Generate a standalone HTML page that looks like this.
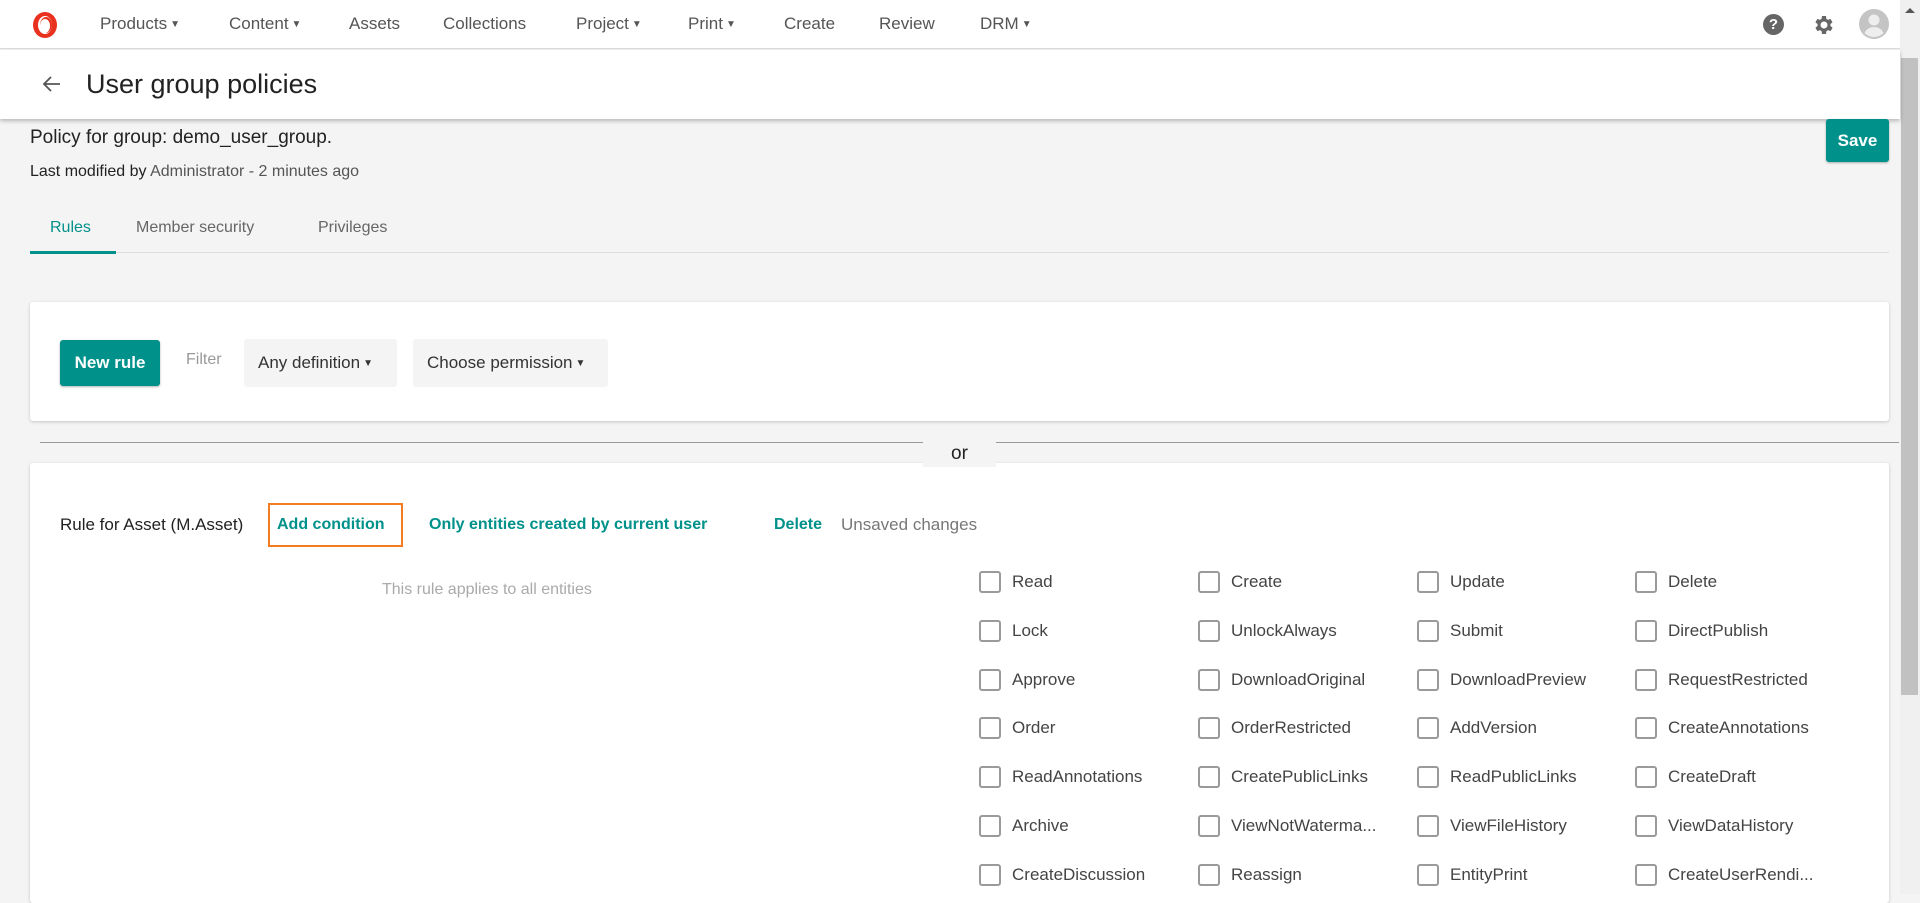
<!DOCTYPE html>
<html><head><meta charset="utf-8"><style>
*{box-sizing:border-box;margin:0;padding:0}
body{width:1920px;height:894px;overflow:hidden;background:#f4f4f4;font-family:"Liberation Sans",sans-serif;color:#222;position:relative}
.abs{position:absolute;white-space:nowrap}
.nav{position:absolute;left:0;top:0;width:1900px;height:49px;background:#fff;border-bottom:1px solid #ddd}
.nav .it{position:absolute;top:14px;font-size:17px;color:#555}
.car{font-size:10px;vertical-align:2px;margin-left:3px}
.hdr{position:absolute;left:0;top:50px;width:1900px;height:69px;background:#fff;box-shadow:0 2px 4px rgba(0,0,0,.25)}
.teal{color:#00918a}
.card{position:absolute;left:30px;width:1859px;background:#fff;box-shadow:0 1px 3px rgba(0,0,0,.2);border-radius:3px}
.cb{position:absolute;width:22px;height:22px;border:2px solid #9a9a9a;border-radius:3px;background:#fff}
.lb{position:absolute;font-size:17px;color:#444;white-space:nowrap}
</style></head><body>
<div class="nav">
  <svg class="abs" style="left:31px;top:10px" width="28" height="30" viewBox="0 0 28 30"><ellipse cx="14" cy="15" rx="12" ry="13" fill="#e8321f"/><ellipse cx="14" cy="15" rx="7" ry="9" fill="#fff"/><ellipse cx="15" cy="15" rx="6" ry="8" fill="#e8321f"/><ellipse cx="14" cy="16" rx="5" ry="7" fill="#fff"/></svg>
  <span class="it" style="left:100px">Products<span class="car">▼</span></span>
  <span class="it" style="left:229px">Content<span class="car">▼</span></span>
  <span class="it" style="left:349px">Assets</span>
  <span class="it" style="left:443px">Collections</span>
  <span class="it" style="left:576px">Project<span class="car">▼</span></span>
  <span class="it" style="left:688px">Print<span class="car">▼</span></span>
  <span class="it" style="left:784px">Create</span>
  <span class="it" style="left:879px">Review</span>
  <span class="it" style="left:980px">DRM<span class="car">▼</span></span>
  <div class="abs" style="left:1763px;top:14px;width:21px;height:21px;border-radius:50%;background:#666;color:#fff;font-weight:bold;font-size:15px;text-align:center;line-height:21px">?</div>
  <svg class="abs" style="left:1811px;top:13px" width="24" height="24" viewBox="0 0 24 24"><path fill="#666" d="M19.4 13a7.5 7.5 0 000-2l2.1-1.6-2-3.5-2.5 1a7.4 7.4 0 00-1.7-1L15 3h-4l-.4 2.9a7.4 7.4 0 00-1.7 1l-2.5-1-2 3.5L6.6 11a7.5 7.5 0 000 2l-2.2 1.6 2 3.5 2.5-1a7.4 7.4 0 001.7 1L11 21h4l.4-2.9a7.4 7.4 0 001.7-1l2.5 1 2-3.5zM13 15.5a3.5 3.5 0 110-7 3.5 3.5 0 010 7z"/></svg>
  <svg class="abs" style="left:1859px;top:9px" width="30" height="30" viewBox="0 0 30 30"><circle cx="15" cy="15" r="15" fill="#c4c4c4"/><circle cx="15" cy="11" r="5.5" fill="#eee"/><path d="M5.5 24c2-4.5 6-6 9.5-6s7.5 1.5 9.5 6a13 13 0 01-19 0z" fill="#eee"/></svg>
</div>
<div class="abs" style="left:1900px;top:0;width:20px;height:894px;background:#f0f0f0"></div>
<div class="abs" style="left:1905px;top:8px;width:0;height:0;border-left:5px solid transparent;border-right:5px solid transparent;border-bottom:5px solid #555"></div>
<div class="abs" style="left:1901px;top:58px;width:17px;height:637px;background:#c1c1c1"></div>
<div class="hdr">
  <svg class="abs" style="left:42px;top:24px" width="20" height="20" viewBox="0 0 20 20"><path d="M18 10H3M9 3l-7 7 7 7" stroke="#555" stroke-width="1.8" fill="none"/></svg>
  <span class="abs" style="left:86px;top:19px;font-size:27px;color:#222">User group policies</span>
</div>
<span class="abs" style="left:30px;top:127px;font-size:19px">Policy for group: demo_user_group.</span>
<span class="abs" style="left:30px;top:163px;font-size:16px;color:#333"><span style="color:#222">Last modified by</span> <span style="color:#555">Administrator - 2 minutes ago</span></span>
<div class="abs" style="left:1826px;top:119px;width:63px;height:43px;background:#00918a;border-radius:3px;color:#fff;font-weight:bold;font-size:17px;text-align:center;line-height:43px;box-shadow:0 1px 2px rgba(0,0,0,.3)">Save</div>
<span class="abs teal" style="left:50px;top:219px;font-size:16px">Rules</span>
<span class="abs" style="left:136px;top:219px;font-size:16px;color:#666">Member security</span>
<span class="abs" style="left:318px;top:219px;font-size:16px;color:#666">Privileges</span>
<div class="abs" style="left:30px;top:252px;width:1859px;height:1px;background:#ddd"></div>
<div class="abs" style="left:30px;top:251px;width:86px;height:3px;background:#00918a"></div>

<div class="card" style="top:302px;height:119px">
  <div class="abs" style="left:30px;top:38px;width:100px;height:46px;background:#00918a;border-radius:3px;color:#fff;font-weight:bold;font-size:17px;text-align:center;line-height:46px;box-shadow:0 1px 2px rgba(0,0,0,.3)">New rule</div>
  <span class="abs" style="left:156px;top:49px;font-size:16px;color:#999">Filter</span>
  <div class="abs" style="left:214px;top:37px;width:153px;height:48px;background:#f4f4f4;border-radius:3px;font-size:17px;color:#333;line-height:48px;padding-left:14px">Any definition<span class="car">▼</span></div>
  <div class="abs" style="left:383px;top:37px;width:195px;height:48px;background:#f4f4f4;border-radius:3px;font-size:17px;color:#333;line-height:48px;padding-left:14px">Choose permission<span class="car">▼</span></div>
</div>
<div class="abs" style="left:40px;top:442px;width:883px;height:1px;background:#999"></div>
<div class="abs" style="left:996px;top:442px;width:903px;height:1px;background:#999"></div>

<div class="card" style="top:463px;height:440px">
  <span class="abs" style="left:30px;top:52px;font-size:17px">Rule for Asset (M.Asset)</span>
  <div class="abs" style="left:238px;top:40px;width:135px;height:44px;border:2px solid #f47b20"></div>
  <span class="abs teal" style="left:247px;top:53px;font-size:16px;font-weight:bold">Add condition</span>
  <span class="abs teal" style="left:399px;top:53px;font-size:16px;font-weight:bold">Only entities created by current user</span>
  <span class="abs teal" style="left:744px;top:53px;font-size:16px;font-weight:bold">Delete</span>
  <span class="abs" style="left:811px;top:52px;font-size:17px;color:#777">Unsaved changes</span>
  <span class="abs" style="left:352px;top:118px;font-size:16px;color:#aaa">This rule applies to all entities</span>
</div>
<div class="abs" style="left:923px;top:442px;width:73px;height:25px;background:#f4f4f4;text-align:center;font-size:19px;line-height:24px">or</div>

<div id="grid"></div>
<script>
var cols=[979,1198,1417,1635];
var L=[["Read","Create","Update","Delete"],["Lock","UnlockAlways","Submit","DirectPublish"],["Approve","DownloadOriginal","DownloadPreview","RequestRestricted"],["Order","OrderRestricted","AddVersion","CreateAnnotations"],["ReadAnnotations","CreatePublicLinks","ReadPublicLinks","CreateDraft"],["Archive","ViewNotWaterma...","ViewFileHistory","ViewDataHistory"],["CreateDiscussion","Reassign","EntityPrint","CreateUserRendi..."]];
var h="";
for(var r=0;r<L.length;r++){var y=571+r*48.8;for(var c=0;c<4;c++){h+='<div class="cb" style="left:'+cols[c]+'px;top:'+y+'px"></div><span class="lb" style="left:'+(cols[c]+33)+'px;top:'+(y+1)+'px">'+L[r][c]+'</span>';}}
document.getElementById("grid").innerHTML=h;
</script>
</body></html>
